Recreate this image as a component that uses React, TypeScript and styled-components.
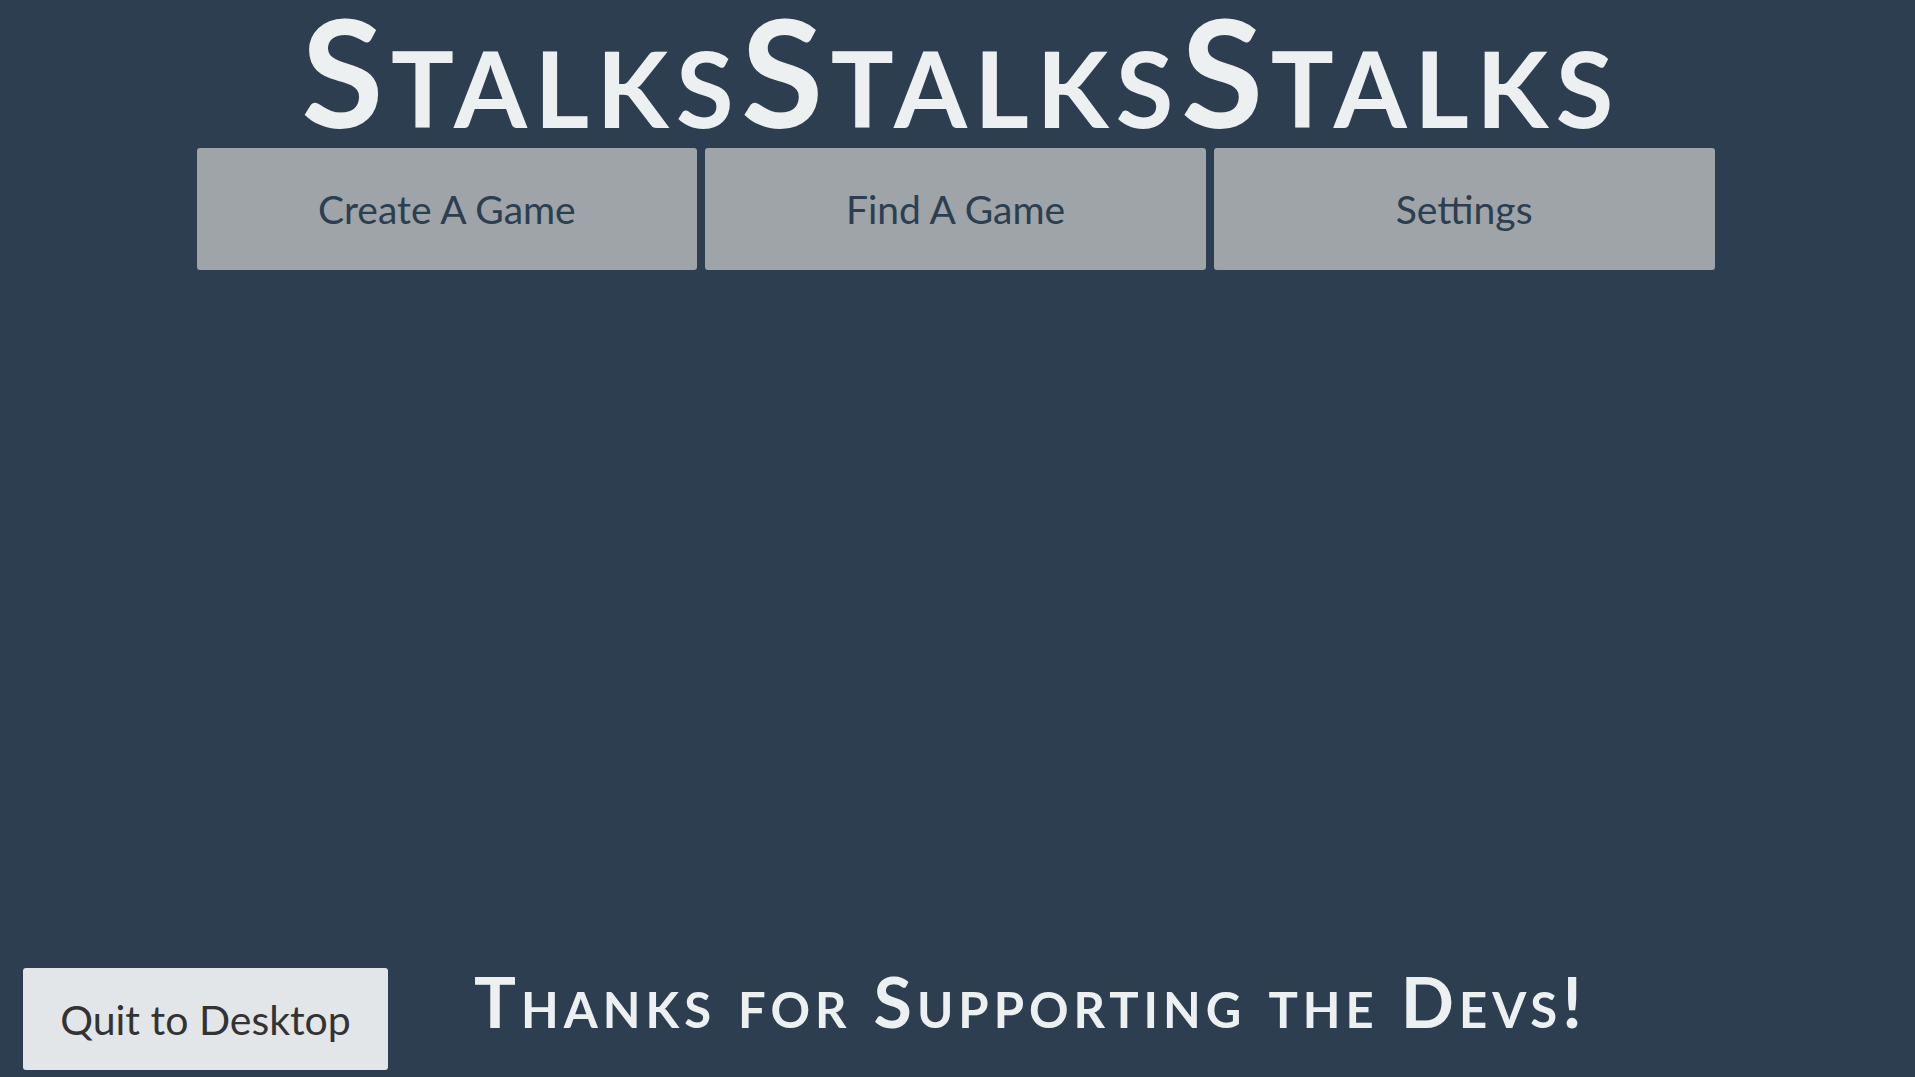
import styled, { createGlobalStyle } from 'styled-components';

const GlobalStyle = createGlobalStyle`
    html, body {
        margin: 0;
        padding: 0;
        background-color: #2c3e50;
    }
    body {
        font-family: Lato, 'Open Sans', sans-serif;
    }
`;

const Screen = styled.div`
    height: 100vh;
    display: flex;
    flex-direction: column;
    align-items: center;
    background-color: #2c3e50;
    overflow: hidden;
`;

const Title = styled.h1`
    margin: 0 0 8px;
    font-size: 150px;
    line-height: 140px;
    font-weight: 700;
    font-variant: small-caps;
    letter-spacing: 7.5px;
    text-indent: 7px;
    color: #ecf0f1;
`;

const Menu = styled.nav`
    display: flex;
    gap: 8px;
    width: 1518px;
    margin-right: 4px;
`;

const MenuButton = styled.button`
    flex: 1;
    height: 122px;
    border: none;
    border-radius: 3px;
    background-color: #9ea4a7;
    color: #2c3e50;
    font-family: Lato, sans-serif;
    font-size: 39px;
    font-weight: 400;
    padding: 0;
    cursor: pointer;
`;

const Footer = styled.footer`
    margin-top: auto;
    width: 100%;
    box-sizing: border-box;
    padding: 0 0 7px 23px;
    display: flex;
    align-items: flex-end;
    gap: 86px;
`;

const QuitButton = styled.button`
    width: 365px;
    height: 102px;
    border: none;
    border-radius: 3px;
    background-color: #e3e6e8;
    color: #333;
    font-family: Lato, sans-serif;
    font-size: 41px;
    cursor: pointer;
`;

const Thanks = styled.h2`
    margin: 0 0 34px;
    font-size: 70px;
    line-height: 70px;
    font-weight: 700;
    font-variant: small-caps;
    letter-spacing: 5px;
    color: #ecf0f1;
`;

const App: React.FC = () => {
    const items = ['Create A Game', 'Find A Game', 'Settings'];

    return (
        <Screen>
            <GlobalStyle />
            <Title>StalksStalksStalks</Title>
            <Menu>
                {items.map(label => (
                    <MenuButton key={label}>{label}</MenuButton>
                ))}
            </Menu>
            <Footer>
                <QuitButton>Quit to Desktop</QuitButton>
                <Thanks>Thanks for Supporting the Devs!</Thanks>
            </Footer>
        </Screen>
    );
};

export default App;
